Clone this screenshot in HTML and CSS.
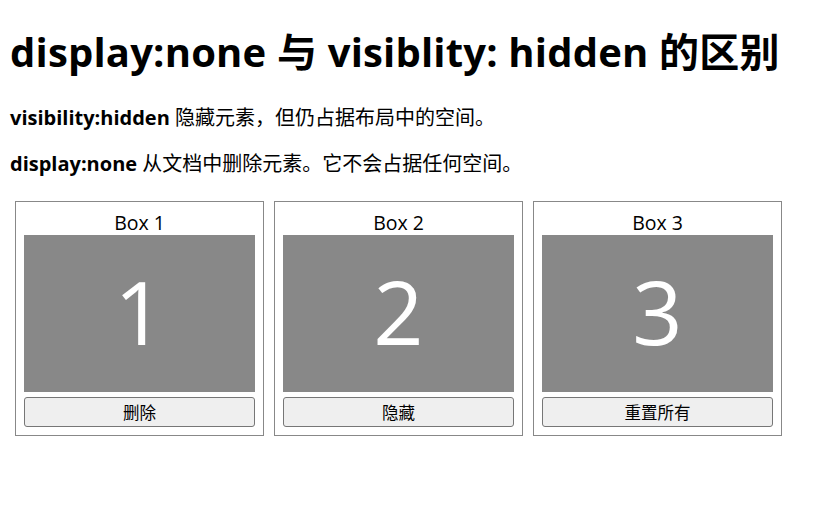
FILE: index.html
```html
<!DOCTYPE html>
<html lang="zh-CN">
<head>
<meta charset="utf-8">
<title>display:none 与 visiblity: hidden 的区别</title>
<link rel="stylesheet" href="styles.css">
</head>
<body>
<h1 class="title">display:none 与 visiblity: hidden 的区别</h1>
<p class="desc"><strong>visibility:hidden</strong> 隐藏元素，但仍占据布局中的空间。</p>
<p class="desc"><strong>display:none</strong> 从文档中删除元素。它不会占据任何空间。</p>
<div class="boxes">
  <div class="box">
    <div class="box-title">Box 1</div>
    <div class="box-num">1</div>
    <button class="btn">删除</button>
  </div>
  <div class="box">
    <div class="box-title">Box 2</div>
    <div class="box-num">2</div>
    <button class="btn">隐藏</button>
  </div>
  <div class="box">
    <div class="box-title">Box 3</div>
    <div class="box-num">3</div>
    <button class="btn">重置所有</button>
  </div>
</div>
</body>
</html>
```

FILE: styles.css
```css
html, body {
  margin: 0;
  padding: 0;
  background: #fff;
}
body {
  padding: 0 10px;
  font-family: "Open Sans", "Noto Sans CJK SC", sans-serif;
  color: #000;
}
.title {
  margin: 26px 0 28px;
  font-size: 40px;
  line-height: 51px;
  font-weight: 700;
  letter-spacing: 0.18px;
  white-space: nowrap;
}
.desc {
  margin: 0 0 20px;
  font-size: 20px;
  line-height: 26px;
}
.desc strong {
  font-weight: 700;
}
.boxes {
  display: flex;
  gap: 10px;
  margin-top: 24px;
  padding-left: 5px;
}
.box {
  width: 249px;
  box-sizing: border-box;
  border: 1px solid #888;
  padding: 8px;
  display: flex;
  flex-direction: column;
}
.box-title {
  height: 25px;
  line-height: 25px;
  font-size: 19.5px;
  text-align: center;
}
.box-num {
  height: 157px;
  box-sizing: border-box;
  padding-bottom: 6px;
  background: #888;
  color: #fff;
  font-size: 88px;
  display: flex;
  align-items: center;
  justify-content: center;
  line-height: 1;
}
.btn {
  margin-top: 5px;
  height: 30px;
  width: 100%;
  box-sizing: border-box;
  background: #efefef;
  border: 1px solid #767676;
  border-radius: 3px;
  font-family: "Noto Sans CJK SC", sans-serif;
  font-size: 16.5px;
  color: #000;
  padding: 0;
}
```
